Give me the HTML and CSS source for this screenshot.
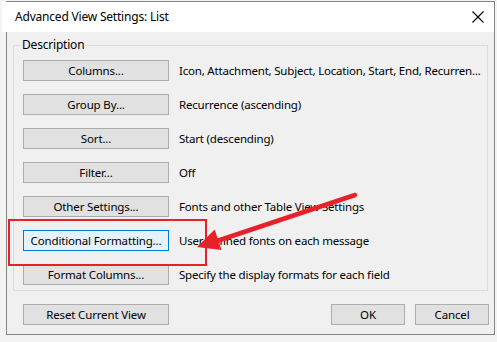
FILE: index.html
```html
<!DOCTYPE html>
<html>
<head>
<meta charset="utf-8">
<link rel="stylesheet" href="styles.css">
</head>
<body>
<div class="dialog">
  <div class="titlebar">
    <span class="title">Advanced View Settings: List</span>
    <svg class="close" width="12" height="12" viewBox="0 0 12 12"><path d="M0.5 0.5 L11.5 11.5 M11.5 0.5 L0.5 11.5" stroke="#000" stroke-width="1.1" fill="none"/></svg>
  </div>
  <div class="content">
    <fieldset class="group">
      <legend class="legend">Description</legend>
      <div class="rows">
        <button class="btn">Columns...</button><span class="desc">Icon, Attachment, Subject, Location, Start, End, Recurren...</span>
        <button class="btn">Group By...</button><span class="desc">Recurrence (ascending)</span>
        <button class="btn">Sort...</button><span class="desc">Start (descending)</span>
        <button class="btn">Filter...</button><span class="desc">Off</span>
        <button class="btn">Other Settings...</button><span class="desc">Fonts and other Table View Settings</span>
        <button class="btn focus">Conditional Formatting...</button><span class="desc">User defined fonts on each message</span>
        <button class="btn">Format Columns...</button><span class="desc">Specify the display formats for each field</span>
      </div>
    </fieldset>
    <div class="footer">
      <button class="btn">Reset Current View</button>
      <div class="actions">
        <button class="btn small">OK</button>
        <button class="btn small">Cancel</button>
      </div>
    </div>
  </div>
</div>
<svg class="annot" width="497" height="342" viewBox="0 0 497 342">
  <rect x="9" y="220" width="197" height="45" fill="none" stroke="#e8202a" stroke-width="2"/>
  <line x1="355" y1="195" x2="214" y2="242" stroke="#e8202a" stroke-width="4.5" stroke-linecap="round"/>
  <polygon points="197,247 214.7,229.5 221.5,250" fill="#e8202a"/>
</svg>
</body>
</html>
```
FILE: styles.css
```css
html, body {
  margin: 0;
  padding: 0;
}
body {
  width: 497px;
  height: 342px;
  background: #f3f3f3;
  font-family: "Noto Sans", "Open Sans", sans-serif;
  font-size: 11.5px;
  letter-spacing: -0.2px;
  color: #000;
  position: relative;
  overflow: hidden;
}
.dialog {
  margin: 1px 0 0 6px;
  width: 489px;
  height: 334px;
  box-sizing: border-box;
  border: 1px solid #858585;
  background: #f0f0f0;
  display: flex;
  flex-direction: column;
}
.titlebar {
  height: 30px;
  background: #fff;
  display: flex;
  align-items: center;
  justify-content: space-between;
  padding: 0 10px 0 13px;
  margin-left: -5px;
}
.title {
  font-size: 12px;
  margin-top: -1px;
}
.close {
  display: block;
}
.content {
  flex: 1;
  padding: 6px 5px 0 6px;
  display: flex;
  flex-direction: column;
}
.group {
  margin: 0;
  padding: 8px 0 5px 9px;
  border: 1px solid #dcdcdc;
  width: 475px;
  box-sizing: border-box;
  min-width: 0;
}
.legend {
  padding: 0 2px;
  margin-left: -3px;
  font-size: 12px;
  line-height: 14px;
}
.rows {
  display: grid;
  grid-template-columns: 146px auto;
  column-gap: 10px;
  row-gap: 13px;
  align-items: center;
}
.btn {
  height: 21px;
  width: 146px;
  box-sizing: border-box;
  border: 1px solid #adadad;
  background: #e1e1e1;
  font-family: inherit;
  font-size: 11.5px;
  letter-spacing: -0.15px;
  color: #000;
  padding: 0;
  margin: 0;
  line-height: 18px;
}
.btn.focus {
  background: #e5f1fb;
  border-color: #0078d7;
}
.btn.small {
  width: 74px;
}
.desc {
  white-space: nowrap;
  line-height: 16px;
}
.footer {
  margin-top: 13px;
  padding-left: 10px;
  display: flex;
  justify-content: space-between;
}
.actions {
  display: flex;
  gap: 10px;
}
.annot {
  position: absolute;
  left: 0;
  top: 0;
  pointer-events: none;
}
```
